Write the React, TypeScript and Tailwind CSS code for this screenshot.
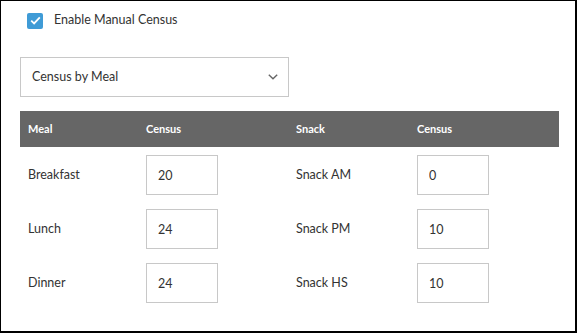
import { useState } from 'react'

type Row = { meal: string; mealCount: string; snack: string; snackCount: string }

const ROWS: Row[] = [
  { meal: 'Breakfast', mealCount: '20', snack: 'Snack AM', snackCount: '0' },
  { meal: 'Lunch', mealCount: '24', snack: 'Snack PM', snackCount: '10' },
  { meal: 'Dinner', mealCount: '24', snack: 'Snack HS', snackCount: '10' },
]

function CensusInput({ value }: { value: string }) {
  return (
    <input
      type="text"
      defaultValue={value}
      className="h-10 w-[72px] border border-[#c8c8c8] bg-white px-[11px] text-[12.5px] text-[#333] outline-none"
    />
  )
}

export default function App() {
  const [enabled, setEnabled] = useState(true)

  return (
    <div
      className="h-[333px] w-[577px] border-t border-l border-r-2 border-b-2 border-black bg-white text-[12.5px] text-[#333]"
      style={{ fontFamily: 'Lato, "Noto Sans", sans-serif' }}
    >
      <label className="ml-[26px] mt-[11px] flex h-[17px] w-fit cursor-pointer items-center gap-[11px]">
        <span
          onClick={() => setEnabled(!enabled)}
          className={
            'flex h-4 w-4 items-center justify-center rounded-[2px] ' +
            (enabled ? 'bg-[#3f9bd6]' : 'border border-[#999] bg-white')
          }
        >
          {enabled ? (
            <svg width="11" height="9" viewBox="0 0 11 9" fill="none">
              <path d="M1.2 4.6 L4.1 7.4 L9.8 1.4" stroke="white" strokeWidth="1.8" />
            </svg>
          ) : null}
        </span>
        <span>Enable Manual Census</span>
      </label>

      <div className="ml-[19px] mt-[28px] flex h-10 w-[269px] items-center justify-between border border-[#c8c8c8] pl-[11px] pr-[10px]">
        <span>Census by Meal</span>
        <svg width="10" height="6" viewBox="0 0 10 6" fill="none">
          <path d="M0.8 0.8 L5 4.8 L9.2 0.8" stroke="#666" strokeWidth="1.4" />
        </svg>
      </div>

      <div className="ml-[19px] mt-[14px] w-[539px]">
        <div className="grid h-9 grid-cols-[126px_150px_121px_142px] items-center bg-[#666666] text-[11px] font-bold text-white">
          <div className="pl-2">Meal</div>
          <div>Census</div>
          <div>Snack</div>
          <div>Census</div>
        </div>
        <div className="pt-px">
          {ROWS.map((r) => (
            <div key={r.meal} className="grid h-[54px] grid-cols-[126px_150px_121px_142px] items-center">
              <div className="pl-2">{r.meal}</div>
              <div>
                <CensusInput value={r.mealCount} />
              </div>
              <div>{r.snack}</div>
              <div>
                <CensusInput value={r.snackCount} />
              </div>
            </div>
          ))}
        </div>
      </div>
    </div>
  )
}
